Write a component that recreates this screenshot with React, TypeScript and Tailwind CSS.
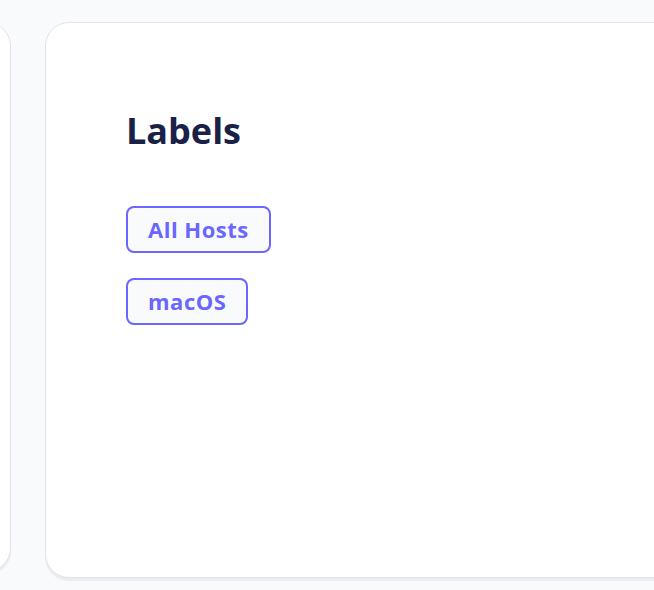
export default function App() {
  const labels = ['All Hosts', 'macOS'];
  return (
    <div className="h-[590px] w-[654px] overflow-hidden bg-[#f9fafc]" style={{ fontFamily: '"Open Sans", "Noto Sans", sans-serif' }}>
      <div className="flex gap-[34px] pt-[22px]">
        <div className="-ml-[289px] h-[550px] w-[300px] shrink-0 rounded-[24px] border border-[#e2e3ea] bg-white shadow-[0_3px_0_#ebecf1]" />
        <div className="h-[556px] w-[700px] shrink-0 rounded-[24px] border border-[#e2e3ea] bg-white px-[80px] pt-[85px] shadow-[0_3px_0_#ebecf1]">
          <h1 className="text-[36px] font-bold leading-[46px] text-[#192147]">Labels</h1>
          <div className="mt-[52px] flex flex-col items-start gap-[25px]">
            {labels.map((l) => (
              <span
                key={l}
                className="flex h-[47px] items-center rounded-[8px] border-2 border-[#6a67fe] bg-[#f9fafc] px-[20px] text-[22px] font-bold tracking-[0.5px] text-[#6a67fe]"
              >
                {l}
              </span>
            ))}
          </div>
        </div>
      </div>
    </div>
  );
}
